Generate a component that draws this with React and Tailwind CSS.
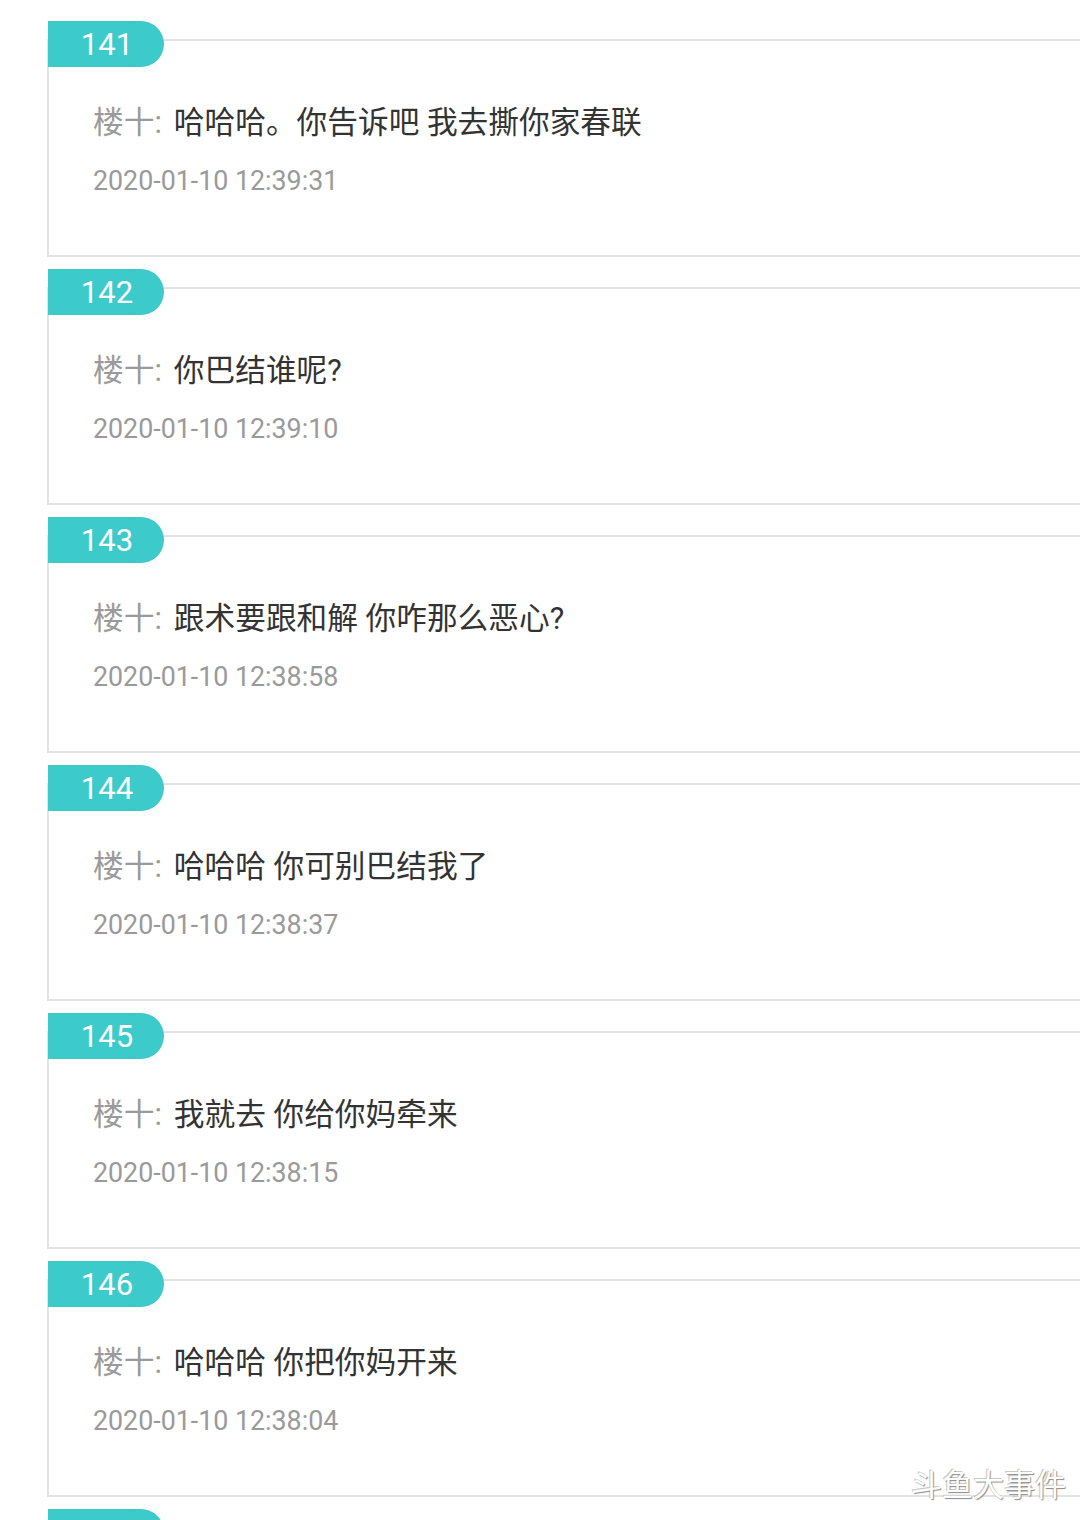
import React from "react";

const items = [
  { n: 141, text: "哈哈哈。你告诉吧 我去撕你家春联", date: "2020-01-10 12:39:31" },
  { n: 142, text: "你巴结谁呢?", date: "2020-01-10 12:39:10" },
  { n: 143, text: "跟术要跟和解 你咋那么恶心?", date: "2020-01-10 12:38:58" },
  { n: 144, text: "哈哈哈 你可别巴结我了", date: "2020-01-10 12:38:37" },
  { n: 145, text: "我就去 你给你妈牵来", date: "2020-01-10 12:38:15" },
  { n: 146, text: "哈哈哈 你把你妈开来", date: "2020-01-10 12:38:04" },
  { n: null, text: null, date: null },
];

const font = { fontFamily: 'Roboto, "Noto Sans CJK SC", sans-serif' };

export default function App() {
  return (
    <div className="relative h-[1520px] w-[1080px] overflow-hidden bg-white" style={font}>
      <div className="flex flex-col pt-[21px]">
        {items.map((it, i) => (
          <div key={i} className={"relative ml-[47px] " + (i === 0 ? "" : "mt-[12px]")}>
            <div className="absolute left-px top-0 z-10 flex h-[46px] w-[116px] items-center justify-center rounded-r-full bg-[#3ccbca] pl-[2px] text-[31px] leading-none text-white">
              {it.n}
            </div>
            <div className="mt-[18px] h-[218px] border-y-2 border-l-2 border-[#e3e3e3] pl-[44px] pt-[59px]">
              {it.text !== null && (
                <>
                  <div className="flex items-center text-[30.7px] leading-[45px]">
                    <span className="mr-[12px] text-[#9a9a9a]">楼十:</span>
                    <span className="text-[#333333]">{it.text}</span>
                  </div>
                  <div className="mt-[16px] text-[26.8px] leading-[40px] text-[#9a9a9a]">{it.date}</div>
                </>
              )}
            </div>
          </div>
        ))}
      </div>
      <div
        className="absolute right-[14px] top-[1466px] text-[31px] leading-[40px] text-white"
        style={{ textShadow: "1px 1px 1px #8a8a8a, -1px -1px 0 #c8c8c8" }}
      >
        斗鱼大事件
      </div>
    </div>
  );
}
